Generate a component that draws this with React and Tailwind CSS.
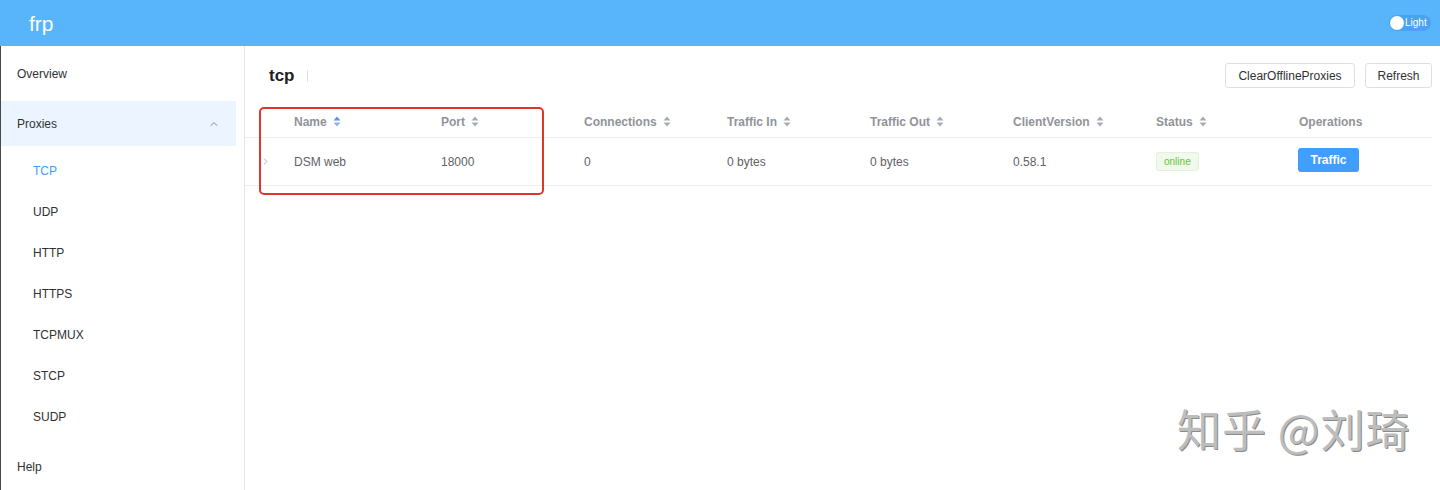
import { ChevronUp, ChevronRight } from 'lucide-react'

const proxyTypes = ['TCP', 'UDP', 'HTTP', 'HTTPS', 'TCPMUX', 'STCP', 'SUDP']

const columns = [
  { label: 'Name', sortable: true, active: true },
  { label: 'Port', sortable: true },
  { label: 'Connections', sortable: true },
  { label: 'Traffic In', sortable: true },
  { label: 'Traffic Out', sortable: true },
  { label: 'ClientVersion', sortable: true },
  { label: 'Status', sortable: true },
  { label: 'Operations' }
]

const SortCaret = ({ active }) => (
  <svg width="8" height="11" viewBox="0 0 8 11" className="ml-[6px]">
    <path d="M4 0.5 L7.5 4.5 L0.5 4.5 Z" fill={active ? '#5d93dc' : '#a8abb2'} />
    <path d="M4 10.5 L7.5 6.5 L0.5 6.5 Z" fill={active ? '#8fb4e6' : '#a8abb2'} />
  </svg>
)

const gridCols = 'grid grid-cols-[49px_147px_143px_143px_143px_143px_143px_143px_1fr]'

const App = () => {
  return (
    <div className="relative h-[490px] w-[1440px] overflow-hidden bg-white font-['Liberation_Sans',Arial,sans-serif]">
      {/* header */}
      <header className="flex h-[46px] items-center justify-between bg-[#58b5fc] pl-[29px] pr-[9px]">
        <span className="text-[21px] leading-none text-white">frp</span>
        <div className="flex h-[16px] w-[42px] items-center rounded-full bg-[#4aa2f2] pl-[1px]">
          <span className="h-[14px] w-[14px] rounded-full bg-white" />
          <span className="ml-[1px] text-[10px] leading-none text-white">Light</span>
        </div>
      </header>

      <div className="flex h-[444px]">
        {/* sidebar */}
        <aside className="w-[245px] shrink-0 border-l border-r border-l-[#4a4a4a] border-r-[#e6e6e6]">
          <nav className="w-[235px] text-[12px] text-[#303133]">
            <div className="mt-[5px] flex h-[46px] items-center pl-[16px]">Overview</div>
            <div className="mt-[4px] flex h-[45px] items-center justify-between bg-[#ecf5ff] pl-[16px] pr-[16px]">
              <span>Proxies</span>
              <ChevronUp size={12} strokeWidth={1.5} className="text-[#606266]" />
            </div>
            <ul className="pt-[4px]">
              {proxyTypes.map((t, i) => (
                <li key={t} className={`flex h-[41px] items-center pl-[32px] ${i === 0 ? 'text-[#409eff]' : ''}`}>
                  {t}
                </li>
              ))}
            </ul>
            <div className="mt-[9px] flex h-[42px] items-center pl-[16px]">Help</div>
          </nav>
        </aside>

        {/* main */}
        <main className="flex-1 pr-[8px]">
          <div className="flex items-center justify-between pb-[18px] pl-[24px] pt-[17px]">
            <div className="flex items-center">
              <h2 className="text-[17px] font-semibold leading-none text-[#1f1f1f]">tcp</h2>
              <span className="ml-[12px] h-[12px] w-px bg-[#dcdfe6]" />
            </div>
            <div className="flex gap-[10px]">
              <button className="h-[25px] w-[130px] rounded-[3px] border border-[#dcdfe6] text-[12px] text-[#303133]">
                ClearOfflineProxies
              </button>
              <button className="h-[25px] w-[67px] rounded-[3px] border border-[#dcdfe6] text-[12px] text-[#303133]">
                Refresh
              </button>
            </div>
          </div>

          {/* table */}
          <div className="text-[12px]">
            <div className={`${gridCols} h-[32px] items-center border-b border-[#ebeef5] font-semibold text-[#909399]`}>
              <div />
              {columns.map(c => (
                <div key={c.label} className="flex items-center">
                  {c.label}
                  {c.sortable && <SortCaret active={c.active} />}
                </div>
              ))}
            </div>
            <div className={`${gridCols} h-[48px] items-center border-b border-[#ebeef5] text-[#606266]`}>
              <div className="pl-[15px]">
                <ChevronRight size={11} strokeWidth={1.5} className="text-[#909399]" />
              </div>
              <div>DSM web</div>
              <div>18000</div>
              <div>0</div>
              <div>0 bytes</div>
              <div>0 bytes</div>
              <div>0.58.1</div>
              <div>
                <span className="inline-flex h-[19px] items-center rounded-[3px] border border-[#e1f3d8] bg-[#f0f9eb] px-[7px] text-[10px] text-[#67c23a]">
                  online
                </span>
              </div>
              <div>
                <button className="-ml-px -mt-[8px] h-[24px] w-[61px] rounded-[3px] bg-[#409eff] text-[12px] font-semibold text-white">
                  Traffic
                </button>
              </div>
            </div>
          </div>
        </main>
      </div>

      {/* annotation box */}
      <div className="absolute left-[259px] top-[107px] h-[88px] w-[285px] rounded-[5px] border-2 border-[#e0352b]" />

      {/* watermark */}
      <div className="absolute left-[1177px] top-[406px] font-['Noto_Sans_CJK_SC',sans-serif] text-[44px] leading-none tracking-[1px] text-[#bdbdbd] [text-shadow:1px_1px_0_#8a8a8a]">
        知乎 @刘琦
      </div>
    </div>
  )
}

export default App
